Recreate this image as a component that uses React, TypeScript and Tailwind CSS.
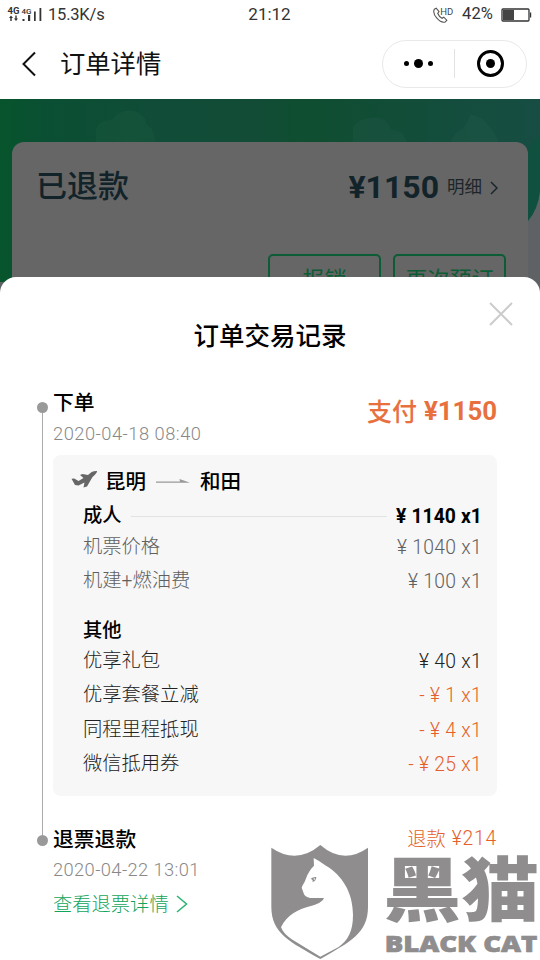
import clsx from 'clsx';

interface PriceRow {
  label: string;
  price: string;
  discount?: boolean;
}

const ticketRows: PriceRow[] = [
  { label: '机票价格', price: '¥ 1040 x1' },
  { label: '机建+燃油费', price: '¥ 100 x1' },
];

const otherRows: PriceRow[] = [
  { label: '优享礼包', price: '¥ 40 x1' },
  { label: '优享套餐立减', price: '- ¥ 1 x1', discount: true },
  { label: '同程里程抵现', price: '- ¥ 4 x1', discount: true },
  { label: '微信抵用券', price: '- ¥ 25 x1', discount: true },
];

function StatusBar() {
  return (
    <div className="grid h-[29px] grid-cols-3 items-center pr-[8px] pl-[7px] font-[Roboto] text-[16.5px] text-[#333]">
      <div className="flex items-center">
        <svg className="mr-[6px] h-[18px] w-[35px]" viewBox="0 0 35 18" fill="#333">
          <text x="0.5" y="8" fontSize="9.5" fontWeight="700" fontFamily="Roboto, sans-serif">4G</text>
          <text x="14.5" y="7.5" fontSize="8" fontWeight="500" fontFamily="Roboto, sans-serif">4G</text>
          <path d="M4 9.5 6 12H4.7v3H3.3v-3H2zM9 15l-2-2.500h1.300v-3h1.400v3H11z" />
          <path d="M15.500 13h2v2h-2zM21 9h2.200v6H21zM27 5.500h1.700V15H27zM32.500 2h1.800v13h-1.800z" />
        </svg>
        <span className="mt-px tracking-[-0.2px]">15.3K/s</span>
      </div>
      <span className="text-center text-[17px]">21:12</span>
      <div className="flex items-center justify-end">
        <svg className="mr-[7px] h-[18px] w-[23px]" viewBox="0 0 23 18" fill="none" stroke="#555" strokeWidth="1.1">
          <path d="M2.300 3.300 4.200 2.200 7 5.600 5.700 7.300C6.500 9.500 8 11.200 10 12.300L11.800 11.200 14.800 14.200 13.200 16C8 17.500-.2 8.500 2.300 3.300Z" />
          <text x="8.300" y="8.500" fontSize="9.500" fill="#444" stroke="none" fontFamily="Roboto, sans-serif">HD</text>
        </svg>
        <span className="tracking-[0.1px]">42%</span>
        <svg className="ml-[8px] h-[14px] w-[31px]" viewBox="0 0 31 14">
          <rect x="1" y="1" width="27" height="12" rx="1" fill="none" stroke="#333" strokeWidth="1.3" />
          <rect x="2" y="2" width="11" height="10" fill="#444" />
          <path d="M29 4.500h1.200v5H29z" fill="#333" />
        </svg>
      </div>
    </div>
  );
}

function NavBar() {
  return (
    <div className="flex h-[70px] items-center pr-[13px] pl-[21px]">
      <svg className="mb-px h-[26px] w-4" viewBox="0 0 16 26" fill="none" stroke="#111" strokeWidth="2">
        <path d="M14 1.500 2.500 13 14 24.500" />
      </svg>
      <h1 className="ml-[23px] flex-1 text-[25.3px] text-[#111]">订单详情</h1>
      <div className="mb-px flex h-12 w-[145px] items-center rounded-full border border-[#e9e9e9]">
        <div className="flex flex-1 items-center justify-center gap-[5px]">
          <i className="size-[5px] rounded-full bg-black" />
          <i className="size-[9px] rounded-full bg-black" />
          <i className="size-[5px] rounded-full bg-black" />
        </div>
        <div className="h-[29px] w-px bg-[#e2e2e2]" />
        <div className="flex flex-1 justify-center">
          <div className="flex size-[27px] items-center justify-center rounded-full border-[3px] border-black">
            <i className="size-[9px] rounded-full bg-black" />
          </div>
        </div>
      </div>
    </div>
  );
}

function OrderBanner() {
  return (
    <div className="relative h-[202px] overflow-hidden bg-[#5e6264]">
      <svg className="absolute inset-0 h-full w-full" viewBox="0 0 540 202">
        <defs>
          <linearGradient id="banner" x1="0" y1="0" x2="1" y2="0">
            <stop offset="0" stopColor="#07552c" />
            <stop offset="0.08" stopColor="#0a4f33" />
            <stop offset="0.3" stopColor="#114c38" />
            <stop offset="0.48" stopColor="#124c37" />
            <stop offset="0.55" stopColor="#0f4e30" />
            <stop offset="0.8" stopColor="#134d3b" />
            <stop offset="1" stopColor="#174d43" />
          </linearGradient>
        </defs>
        <path d="M0 0H540V92Q538 110 528 122L500 170L12 183H0Z" fill="url(#banner)" />
        <path d="M528 50l12-14v56q-2 18-12 30z" fill="#08563a" opacity="0.5" />
        <path d="M96 45V30q3-10 16-9 8-12 22-9 11 3 13 14 8 3 8 19Z" fill="#1b5a3e" opacity="0.4" />
        <path d="M353 45V28q7-9 18-9 15-3 20 12 14 0 16 14ZM450 45q3-12 13-15l8-15 12 5 10 12 7 13Z" fill="#205748" opacity="0.4" />
      </svg>
      <div className="relative mx-3 mt-[43px] h-[159px] rounded-t-[12px] bg-[#666] pr-[22px] pl-[24px]">
        <div className="flex h-[87px] items-center text-[#12232a]">
          <span className="flex-1 text-[31px] font-medium">已退款</span>
          <span className="mt-[2px] font-[Roboto] text-[32px] font-bold">¥1150</span>
          <span className="mt-[3px] ml-[8px] text-[17.5px] text-[#1c2529]">明细</span>
          <svg className="mt-[4px] mr-[8px] ml-[8px] h-[14px] w-2" viewBox="0 0 8 14" fill="none" stroke="#1c2529" strokeWidth="1.5">
            <path d="m1 1 6 6-6 6" />
          </svg>
        </div>
        <div className="mt-[25px] flex justify-end gap-[12px] text-[22px] text-[#0c5c35]">
          <div className="flex h-12 w-[113px] items-center justify-center rounded-[5px] border-2 border-[#0c5c35]">报销</div>
          <div className="flex h-12 w-[113px] items-center justify-center rounded-[5px] border-2 border-[#0c5c35]">再次预订</div>
        </div>
      </div>
    </div>
  );
}

function PriceLine({ row, muted }: { row: PriceRow; muted?: boolean }) {
  return (
    <div className={clsx('flex items-center justify-between', muted ? 'h-[34px] text-[#606060]' : 'h-[34.5px] text-[#222]')}>
      <span className="font-[Roboto,'Noto_Sans_CJK_SC'] text-[19.3px] font-light">{row.label}</span>
      <span className={clsx('mt-[2px] font-[Roboto] text-[19.3px] font-light tracking-[0.3px]', row.discount && 'text-[#e65f2b]')}>
        {row.price}
      </span>
    </div>
  );
}

function FareCard() {
  return (
    <div className="mt-[8px] h-[341px] rounded-lg bg-[#f7f7f7] pt-[7px] pr-[15px] pl-[30px]">
      <div className="-ml-[12px] flex h-[38px] items-center text-[20.5px] font-medium text-black">
        <svg className="mb-[5px] h-[18px] w-[27px]" viewBox="0 0 27 18" fill="#666">
          <path d="M.5 8.800 3.200 8.600 7.500 11 12.500 8 9 5 11.500 4 17 5C19.500 2.500 22 .8 26 1 26.300 2 25 4 21.500 7L16 16.500 12.500 17.600 13.500 12.500 7.500 15.500 4 15Z" />
        </svg>
        <span className="ml-[7px]">昆明</span>
        <svg className="mx-[9px] h-2 w-[36px]" viewBox="0 0 36 8" fill="#999">
          <path d="M1 4.600H25L24.500 2 35 5.800H1Z" />
        </svg>
        <span>和田</span>
      </div>
      <div className="flex h-[30px] items-center text-[19.3px] text-black">
        <span className="mt-px font-medium">成人</span>
        <div className="mx-[9px] mt-[2px] h-px flex-1 bg-[#e2e2e2]" />
        <span className="mt-[4px] font-[Roboto] font-bold tracking-[0.1px]">¥ 1140 x1</span>
      </div>
      {ticketRows.map((row) => (
        <PriceLine key={row.label} row={row} muted />
      ))}
      <div className="mt-[18px] flex h-[28px] items-center text-[19.3px] font-medium text-black">其他</div>
      {otherRows.map((row) => (
        <PriceLine key={row.label} row={row} />
      ))}
    </div>
  );
}

function Timeline() {
  return (
    <div className="mt-[36px] flex pr-[43px] pl-[36px]">
      <div className="mt-[11px] flex h-[444px] w-[12px] flex-col items-center">
        <i className="size-[11px] rounded-full bg-[#999]" />
        <div className="w-px flex-1 bg-[#aaa]" />
        <i className="size-[11px] rounded-full bg-[#999]" />
      </div>
      <div className="ml-[5px] flex-1">
        {/* 下单 */}
        <div className="flex h-14 justify-between">
          <div>
            <h3 className="-mt-px h-6 text-[20.8px] leading-6 font-medium text-black">下单</h3>
            <p className="mt-[8px] font-[Roboto] text-[18.3px] leading-6 font-light tracking-[0.5px] text-[#888]">2020-04-18 08:40</p>
          </div>
          <p className="mt-[4px] flex h-8 gap-[7px] text-[25px] leading-8 font-medium text-[#e8703f]">
            支付
            <span className="font-[Roboto] text-[25.8px] font-bold">¥1150</span>
          </p>
        </div>
        <FareCard />
        {/* 退票退款 */}
        <div className="mt-[31px] flex justify-between">
          <div>
            <h3 className="h-6 text-[20.8px] leading-6 font-medium text-black">退票退款</h3>
            <p className="mt-[7px] font-[Roboto] text-[18.3px] leading-6 font-light tracking-[0.4px] text-[#888]">2020-04-22 13:01</p>
            <a className="mt-[10px] flex h-6 items-center text-[19.3px] font-light text-[#12a45c]">
              查看退票详情
              <svg className="ml-[7px] h-[18px] w-3" viewBox="0 0 12 18" fill="none" stroke="#2fb574" strokeWidth="1.6">
                <path d="m1 1 9.500 8L1 17" />
              </svg>
            </a>
          </div>
          <p className="flex gap-[6px] text-[19.3px] leading-6 font-light text-[#e65f2b]">
            退款
            <span className="font-[Roboto] tracking-[0.8px]">¥214</span>
          </p>
        </div>
      </div>
    </div>
  );
}

function Watermark() {
  return (
    <svg className="absolute right-0 bottom-0 h-40 w-[280px]" viewBox="0 0 840 480" fill="#8f8d8e">
      <path d="M34 143Q110 195 181 135Q250 195 324 143V320C324 400 270 425 181 477C90 425 34 400 34 320Z" />
      <path
        fill="#fff"
        d="M161 174 177 183 198 197C245 225 279 275 279 345C279 395 264 420 236 441L181 470 95 418C80 408 68 395 63 382C80 345 115 328 150 319C172 313 187 306 192 294L150 294C137 291 133 286 131 280L125 263C127 255 134 249 137 238C143 221 151 207 162 197Z"
      />
      <path d="M152 236q8-6 17-5-1 14-12 15 4-6-5-10Z" />
      <circle cx="163" cy="237" r="2.500" fill="#fff" />
      <text x="370" y="349" fontSize="212" fontWeight="900" textLength="468" lengthAdjust="spacingAndGlyphs" fontFamily="Lato, 'Noto Sans CJK SC', sans-serif">黑猫</text>
      <text x="374" y="456" fontSize="68" fontWeight="900" stroke="#8f8d8e" strokeWidth="2" textLength="458" lengthAdjust="spacingAndGlyphs" fontFamily="'Open Sans', Lato, sans-serif">BLACK CAT</text>
    </svg>
  );
}

export default function App() {
  return (
    <div className="relative h-[960px] w-[540px] overflow-hidden bg-white font-[Lato,'Noto_Sans_CJK_SC',sans-serif]">
      <StatusBar />
      <NavBar />
      <OrderBanner />
      <div className="relative -mt-6 h-[683px] rounded-t-[16px] bg-white pt-[38px]">
        <h2 className="flex h-10 items-center justify-center text-[25.5px] font-medium text-black">订单交易记录</h2>
        <svg className="absolute top-[25px] right-[27px] size-6" viewBox="0 0 24 24" stroke="#ccc" strokeWidth="2">
          <path d="M1 1 23 23M23 1 1 23" />
        </svg>
        <Timeline />
      </div>
      <Watermark />
    </div>
  );
}
